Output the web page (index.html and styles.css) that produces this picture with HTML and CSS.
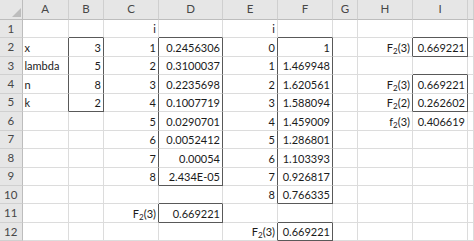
FILE: index.html
```html
<!DOCTYPE html>
<html lang="en">
<head>
<meta charset="utf-8">
<title>Sheet</title>
<link rel="stylesheet" href="styles.css">
</head>
<body>
<div class="sheet">
  <div class="row hdr">
    <div class="corner"><span class="tri"></span></div>
    <div>A</div><div>B</div><div>C</div><div>D</div><div>E</div><div>F</div><div>G</div><div>H</div><div>I</div><div></div>
  </div>
  <div class="row">
    <div class="rh">1</div>
    <div></div><div class="b"></div><div class="n">i</div><div class="b"></div><div class="n">i</div><div class="b"></div><div></div><div></div><div class="b"></div><div></div>
  </div>
  <div class="row">
    <div class="rh">2</div>
    <div class="r">x</div><div class="n r">3</div><div class="n r">1</div><div class="n r">0.2456306</div><div class="n r">0</div><div class="n r">1</div><div></div><div class="n r"><span>F<sub class="s">2</sub>(3)</span></div><div class="n r b">0.669221</div><div></div>
  </div>
  <div class="row">
    <div class="rh">3</div>
    <div class="r">lambda</div><div class="n r">5</div><div class="n r">2</div><div class="n r">0.3100037</div><div class="n r">1</div><div class="n r">1.469948</div><div></div><div></div><div class="b"></div><div></div>
  </div>
  <div class="row">
    <div class="rh">4</div>
    <div class="r">n</div><div class="n r">8</div><div class="n r">3</div><div class="n r">0.2235698</div><div class="n r">2</div><div class="n r">1.620561</div><div></div><div class="n r"><span>F<sub class="s">2</sub>(3)</span></div><div class="n r">0.669221</div><div></div>
  </div>
  <div class="row">
    <div class="rh">5</div>
    <div class="r">k</div><div class="n r b">2</div><div class="n r">4</div><div class="n r">0.1007719</div><div class="n r">3</div><div class="n r">1.588094</div><div></div><div class="n r"><span>F<sub class="s">2</sub>(2)</span></div><div class="n r b">0.262602</div><div></div>
  </div>
  <div class="row">
    <div class="rh">6</div>
    <div></div><div></div><div class="n r">5</div><div class="n r">0.0290701</div><div class="n r">4</div><div class="n r">1.459009</div><div></div><div class="n"><span>f<sub class="s">2</sub>(3)</span></div><div class="n">0.406619</div><div></div>
  </div>
  <div class="row">
    <div class="rh">7</div>
    <div></div><div></div><div class="n r">6</div><div class="n r">0.0052412</div><div class="n r">5</div><div class="n r">1.286801</div><div></div><div></div><div></div><div></div>
  </div>
  <div class="row">
    <div class="rh">8</div>
    <div></div><div></div><div class="n r">7</div><div class="n r">0.00054</div><div class="n r">6</div><div class="n r">1.103393</div><div></div><div></div><div></div><div></div>
  </div>
  <div class="row">
    <div class="rh">9</div>
    <div></div><div></div><div class="n r">8</div><div class="n r b">2.434E-05</div><div class="n r">7</div><div class="n r">0.926817</div><div></div><div></div><div></div><div></div>
  </div>
  <div class="row">
    <div class="rh">10</div>
    <div></div><div></div><div></div><div class="b"></div><div class="n r">8</div><div class="n r b">0.766335</div><div></div><div></div><div></div><div></div>
  </div>
  <div class="row">
    <div class="rh">11</div>
    <div></div><div></div><div class="n r"><span>F<sub class="s">2</sub>(3)</span></div><div class="n r b">0.669221</div><div></div><div class="b"></div><div></div><div></div><div></div><div></div>
  </div>
  <div class="row">
    <div class="rh">12</div>
    <div></div><div></div><div></div><div></div><div class="n r"><span>F<sub class="s">2</sub>(3)</span></div><div class="n r b">0.669221</div><div></div><div></div><div></div><div></div>
  </div>
</div>
</body>
</html>
```
FILE: styles.css
```css
* {
  box-sizing: border-box;
}
html, body {
  margin: 0;
  padding: 0;
  background: #ffffff;
}
body {
  font-family: Lato, "Liberation Sans", sans-serif;
  font-size: 11px;
  color: #1b1b1b;
}
.sheet {
  width: 474px;
  overflow: hidden;
}
.row {
  display: grid;
  grid-template-columns: 22.5px 46.5px 35px 55px 64px 55px 55px 25px 55px 55px 1fr;
  height: 18.45px;
}
.row > div {
  display: flex;
  align-items: flex-end;
  padding: 0 2px 1px 2px;
  line-height: 14px;
  white-space: nowrap;
  overflow: visible;
  border-right: 1px solid #dcdcdc;
  border-bottom: 1px solid #dcdcdc;
}
.row > .n {
  justify-content: flex-end;
}
.row > .r {
  border-right-color: #595959;
}
.row > .b {
  border-bottom-color: #595959;
}
.hdr {
  height: 20px;
  background: #e6e6e6;
}
.hdr > div {
  align-items: center;
  justify-content: center;
  color: #474747;
  font-size: 11.5px;
  border-right-color: #cfcfcf;
  border-bottom-color: #bdbdbd;
}
.row > .corner {
  align-items: flex-end;
  justify-content: flex-end;
  padding: 0 1px 2px 0;
  border-right-color: #bdbdbd;
}
.tri {
  display: block;
  width: 0;
  height: 0;
  border-left: 9px solid transparent;
  border-bottom: 9px solid #bdbdbd;
}
.row > .rh {
  background: #e6e6e6;
  align-items: center;
  justify-content: center;
  padding: 0;
  color: #474747;
  font-size: 11.5px;
  border-right-color: #bdbdbd;
  border-bottom-color: #d0d0d0;
}
.s {
  font-size: 8px;
  line-height: 0;
  vertical-align: -2px;
}
```
